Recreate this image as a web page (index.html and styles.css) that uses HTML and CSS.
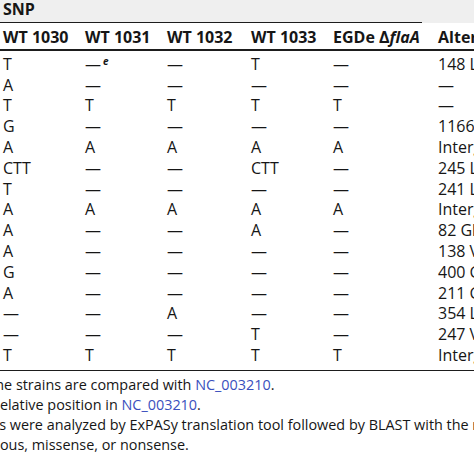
FILE: index.html
```html
<!DOCTYPE html>
<html lang="en">
<head>
<meta charset="utf-8">
<title>SNP table</title>
<link rel="stylesheet" href="styles.css">
</head>
<body>
<div class="page">
  <table class="snp-table">
    <colgroup>
      <col class="w1"><col class="w2"><col class="w3"><col class="w4"><col class="w5"><col class="w6">
    </colgroup>
    <thead>
      <tr class="group-row">
        <th colspan="5" class="group-cell"><div class="group-label">SNP</div></th>
        <th class="group-cell"></th>
      </tr>
      <tr class="strain-row">
        <th>WT 1030</th>
        <th>WT 1031</th>
        <th>WT 1032</th>
        <th>WT 1033</th>
        <th>EGDe <span class="delta">Δ</span><i>flaA</i></th>
        <th>Alteration</th>
      </tr>
    </thead>
    <tbody>
      <tr><td>T</td><td>—<sup class="mark">e</sup></td><td>—</td><td>T</td><td>—</td><td>148 Leu → Phe</td></tr>
      <tr><td>A</td><td>—</td><td>—</td><td>—</td><td>—</td><td>—</td></tr>
      <tr><td>T</td><td>T</td><td>T</td><td>T</td><td>T</td><td>—</td></tr>
      <tr><td>G</td><td>—</td><td>—</td><td>—</td><td>—</td><td>1166 Arg → Gln</td></tr>
      <tr><td>A</td><td>A</td><td>A</td><td>A</td><td>A</td><td>Intergenic</td></tr>
      <tr><td>CTT</td><td>—</td><td>—</td><td>CTT</td><td>—</td><td>245 Leu deletion</td></tr>
      <tr><td>T</td><td>—</td><td>—</td><td>—</td><td>—</td><td>241 Leu → Phe</td></tr>
      <tr><td>A</td><td>A</td><td>A</td><td>A</td><td>A</td><td>Intergenic</td></tr>
      <tr><td>A</td><td>—</td><td>—</td><td>A</td><td>—</td><td>82 Gly → Asp</td></tr>
      <tr><td>A</td><td>—</td><td>—</td><td>—</td><td>—</td><td>138 Val → Ala</td></tr>
      <tr><td>G</td><td>—</td><td>—</td><td>—</td><td>—</td><td>400 Gly → Ser</td></tr>
      <tr><td>A</td><td>—</td><td>—</td><td>—</td><td>—</td><td>211 Gly → Asp</td></tr>
      <tr><td>—</td><td>—</td><td>A</td><td>—</td><td>—</td><td>354 Leu → Ser</td></tr>
      <tr><td>—</td><td>—</td><td>—</td><td>T</td><td>—</td><td>247 Val → Ala</td></tr>
      <tr><td>T</td><td>T</td><td>T</td><td>T</td><td>T</td><td>Intergenic</td></tr>
    </tbody>
  </table>
  <div class="notes">
    <p class="note n1">All the strains are compared with <a class="ref">NC_003210</a>.</p>
    <p class="note n2">Relative position in <a class="ref">NC_003210</a>.</p>
    <p class="note n3">Mutations were analyzed by ExPASy translation tool followed by BLAST with the reference protein to determine whether they are</p>
    <p class="note n4">synonymous, missense, or nonsense.</p>
  </div>
</div>
</body>
</html>
```

FILE: styles.css
```css
html, body {
  margin: 0;
  padding: 0;
  background: #ffffff;
}
body {
  width: 474px;
  height: 474px;
  overflow: hidden;
  font-family: "Open Sans", "Noto Sans", sans-serif;
  color: #161616;
}
.page {
  width: 474px;
  overflow: hidden;
}
.snp-table {
  border-collapse: collapse;
  table-layout: fixed;
  width: 600px;
  font-size: 16px;
}
.w1 { width: 85px; }
.w2 { width: 82px; }
.w3 { width: 84px; }
.w4 { width: 82px; }
.w5 { width: 105px; }
.w6 { width: 162px; }

.snp-table th,
.snp-table td {
  padding: 0;
  text-align: left;
  white-space: nowrap;
  vertical-align: top;
}
.snp-table th:first-child,
.snp-table td:first-child {
  padding-left: 3px;
}

.group-cell {
  background: #efefef;
  font-size: 16px;
  font-weight: 700;
}
.snp-table .group-cell:first-child {
  padding-left: 0;
}
.group-label {
  line-height: 17px;
  padding: 1px 0 4px 3px;
  margin-right: 16px;
  border-bottom: 1.5px solid #1d1d1d;
}

.strain-row th {
  font-size: 16px;
  font-weight: 700;
  line-height: 20.8px;
  padding-top: 4px;
  padding-bottom: 1.5px;
  border-bottom: 2px solid #1d1d1d;
}
.delta {
  font-style: normal;
}

.snp-table td {
  line-height: 20.8px;
}
.snp-table tbody tr:first-child td {
  padding-top: 2.5px;
}
.snp-table tbody tr:last-child td {
  padding-bottom: 4.5px;
  border-bottom: 1.5px solid #1d1d1d;
}
.mark {
  font-size: 10px;
  font-style: italic;
  font-weight: 700;
  line-height: 0;
  vertical-align: 5px;
  margin-left: 2px;
}

.notes {
  padding-top: 4px;
  font-size: 14.4px;
}
.note {
  margin: 0;
  line-height: 20px;
  white-space: nowrap;
}
.n1 { margin-left: -30px; }
.n2 { margin-left: -9px; }
.n3 { margin-left: -62px; }
.n4 { margin-left: -61px; }
.ref {
  color: #3a4fbd;
  text-decoration: none;
}
```
